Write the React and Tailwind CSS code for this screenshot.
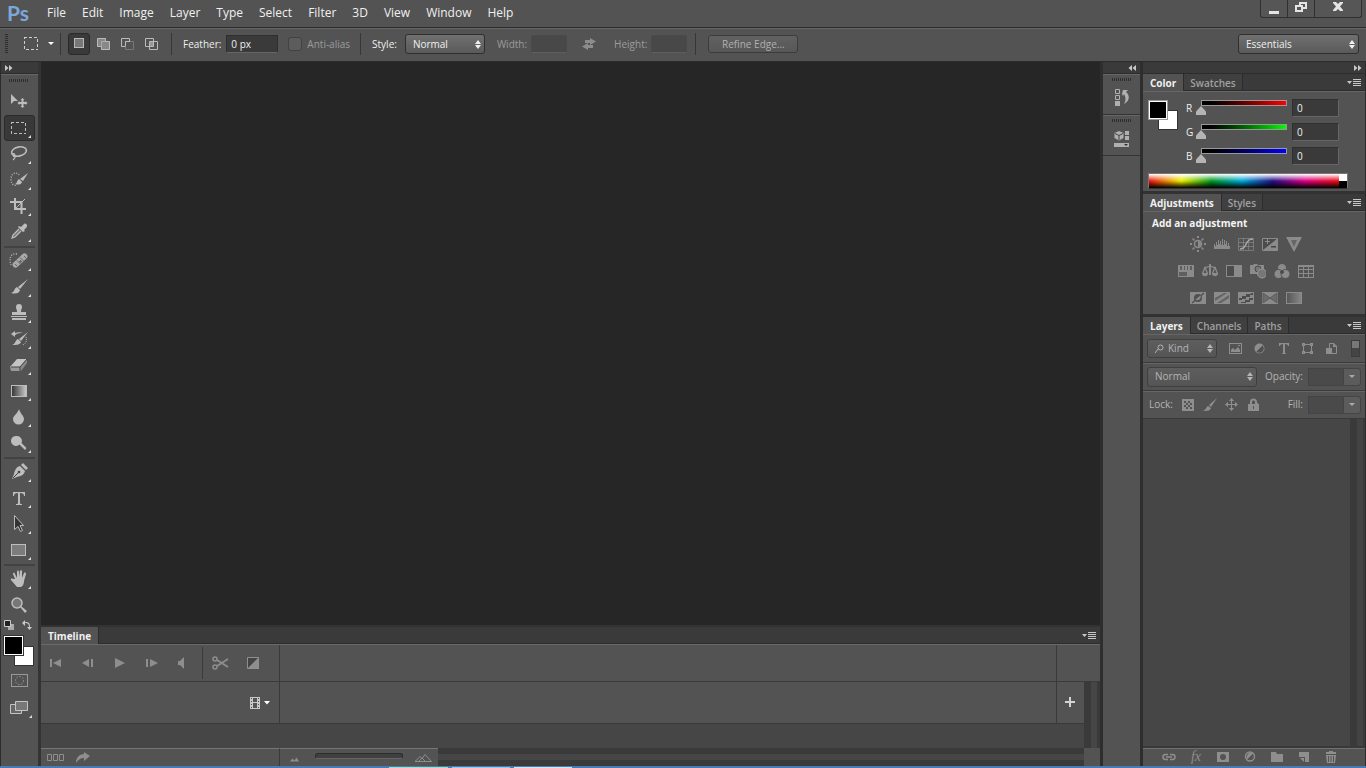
import { clsx } from 'clsx'

const menuItems = ['File', 'Edit', 'Image', 'Layer', 'Type', 'Select', 'Filter', '3D', 'View', 'Window', 'Help']

function Icon({ w = 18, h = 18, className, children }) {
  return (
    <svg width={w} height={h} viewBox={`0 0 ${w} ${h}`} fill="currentColor" className={clsx('block shrink-0', className)} aria-hidden="true">
      {children}
    </svg>
  )
}

function IconButton({ label, className, children }) {
  return (
    <button type="button" aria-label={label} className={clsx('flex shrink-0 items-center justify-center', className)}>
      {children}
    </button>
  )
}

function Divider() {
  return <div className="h-[22px] w-px shrink-0 bg-[#373737]" />
}

function UpDown({ className }) {
  return (
    <Icon w={6} h={9} className={className}>
      <path d="M0 4L3 0L6 4ZM0 5L3 9L6 5Z" />
    </Icon>
  )
}

function Grip({ vertical }) {
  return (
    <div
      className={
        vertical
          ? 'h-5 w-[3px] bg-[repeating-linear-gradient(to_bottom,#2e2e2e_0_1px,#535353_1px_2px)]'
          : 'h-[3px] w-5 bg-[repeating-linear-gradient(to_right,#2e2e2e_0_1px,#535353_1px_2px)]'
      }
    />
  )
}

function Chevrons({ left }) {
  return (
    <Icon w={8} h={6} className={clsx('text-[#c8c8c8]', left && 'rotate-180')}>
      <path d="M0 0L3.5 3L0 6ZM4 0L7.5 3L4 6Z" />
    </Icon>
  )
}

function Select({ label, options, className, selectClassName, muted, icon }) {
  return (
    <div className={clsx('relative flex shrink-0 items-center', muted ? 'text-[#b4b4b4]' : 'text-[#f0f0f0]', className)}>
      {icon && <div className="pointer-events-none absolute left-2">{icon}</div>}
      <select
        aria-label={label}
        className={clsx(
          'h-full w-full appearance-none rounded-[3px] border bg-linear-to-b text-[10px] outline-none',
          muted ? 'border-[#3f3f3f] from-[#5e5e5e] to-[#555555]' : 'border-[#2f2f2f] from-[#707070] to-[#5a5a5a]',
          selectClassName,
        )}
      >
        {options.map((option) => (
          <option key={option}>{option}</option>
        ))}
      </select>
      <UpDown className="pointer-events-none absolute right-1" />
    </div>
  )
}

function MarqueeIcon() {
  return (
    <Icon w={15} h={14}>
      <rect x=".5" y=".5" width="13" height="12" fill="none" stroke="currentColor" strokeDasharray="3 2" strokeDashoffset="1" shapeRendering="crispEdges" />
    </Icon>
  )
}

/* ---------- top bars ---------- */

function MenuBar() {
  return (
    <header className="flex h-[27px] shrink-0 justify-between">
      <div className="flex items-start">
        <div className="w-[39px] pl-[7px] font-['Lato',sans-serif] text-[21px] leading-[25px] font-bold text-[#7ba7d9]">Ps</div>
        <nav className="flex">
          {menuItems.map((item) => (
            <button key={item} type="button" className="h-[25px] px-[8px] text-[12px] text-[#f0f0f0]">
              {item}
            </button>
          ))}
        </nav>
      </div>
      <div className="mr-1 flex h-[18px] rounded-b-[3px] border border-t-0 border-[#303030] bg-[#565656] text-[#e4e4e4]">
        <IconButton label="Minimize" className="w-[27px] border-r border-[#303030]">
          <Icon w={10} h={12}>
            <path d="M0 8h10v3H0z" />
          </Icon>
        </IconButton>
        <IconButton label="Restore" className="w-[27px] border-r border-[#303030]">
          <Icon w={12} h={12} className="-mt-1">
            <path fillRule="evenodd" d="M4 1h8v7H8v3H0V4h4zM6 3v1h2v2h2V3zM2 6v3h4V6z" />
          </Icon>
        </IconButton>
        <IconButton label="Close" className="w-[46px]">
          <Icon w={10} h={11} className="-mt-1">
            <path d="M0 1h3l2 2 2-2h3v1L7 5.500 10 9v1H7L5 8l-2 2H0V9l3-3.500L0 2z" />
          </Icon>
        </IconButton>
      </div>
    </header>
  )
}

const selectionModes = [
  {
    label: 'New selection',
    icon: <rect x="2.5" y="1.5" width="9" height="9" fill="#777" stroke="#b8b8b8" />,
  },
  {
    label: 'Add to selection',
    icon: (
      <>
        <path d="M1.500 1.500h8v3h4v8h-8v-3h-4z" fill="#888" stroke="#bbb" />
        <path d="M5.500 9V4.500H9" fill="none" stroke="#aaa" />
      </>
    ),
  },
  {
    label: 'Subtract from selection',
    icon: (
      <>
        <path d="M5.500 4.500h8v8h-8z" fill="none" stroke="#777" />
        <path d="M5 9.500H1.500v-8h8V4M5.500 9.500v-5H10" fill="none" stroke="#bbb" />
      </>
    ),
  },
  {
    label: 'Intersect with selection',
    icon: (
      <>
        <path d="M1.500 1.500h8v8h-8zM5.500 4.500h8v8h-8z" fill="none" stroke="#bbb" />
        <path d="M6 5h3v4H6z" fill="#999" />
      </>
    ),
  },
]

function OptionsBar() {
  return (
    <div className="flex h-[34px] shrink-0 items-center border-t border-[#2b2b2b] pb-px pl-[5px] text-[10px] text-[#f0f0f0] shadow-[inset_0_1px_0_#666]">
      <Grip vertical />
      <button type="button" aria-label="Tool preset" className="mr-[6px] ml-4 flex items-center gap-[9px] text-[#cfcfcf]">
        <MarqueeIcon />
        <Icon w={6} h={4}>
          <path d="M0 0h6L3 3z" fill="#fff" />
        </Icon>
      </button>
      <Divider />
      <div className="mr-[9px] ml-[7px] flex items-center gap-[2px]">
        {selectionModes.map((mode, i) => (
          <IconButton
            key={mode.label}
            label={mode.label}
            className={clsx('h-[22px] w-[22px] rounded-[3px]', i === 0 && 'border border-[#2a2a2a] bg-[#3a3a3a]')}
          >
            <Icon w={14} h={14}>
              {mode.icon}
            </Icon>
          </IconButton>
        ))}
      </div>
      <Divider />
      <label className="ml-[11px] flex items-center gap-[5px]">
        Feather:
        <input
          type="text"
          defaultValue="0 px"
          className="h-[18px] w-[52px] border border-[#2f2f2f] border-b-[#666] bg-[#3a3a3a] px-1 outline-none"
        />
      </label>
      <label className="mr-[10px] ml-[10px] flex items-center gap-[5px] text-[#9c9c9c]">
        <input type="checkbox" disabled className="h-[14px] w-[14px] appearance-none rounded-[3px] border border-[#424242] bg-[#5c5c5c]" />
        Anti-alias
      </label>
      <Divider />
      <div className="mr-3 ml-[11px] flex items-center gap-2">
        Style:
        <Select label="Style" options={['Normal', 'Fixed Ratio', 'Fixed Size']} className="h-[20px] w-20" selectClassName="pl-[7px]" />
      </div>
      <label className="flex items-center gap-1 text-[#9c9c9c]">
        Width:
        <input type="text" disabled className="h-[18px] w-9 border border-[#4a4a4a] border-b-[#5e5e5e] bg-[#484848]" />
      </label>
      <IconButton label="Swap width and height" className="mr-[18px] ml-[15px] text-[#8c8c8c]">
        <Icon w={14} h={14}>
          <path d="M3 3h5V1l6 3.500L8 8V6H3zM11 8H6V6L0 9.500 6 13v-2h5z" />
        </Icon>
      </IconButton>
      <label className="mr-2 flex items-center gap-1 text-[#9c9c9c]">
        Height:
        <input type="text" disabled className="h-[18px] w-9 border border-[#4a4a4a] border-b-[#5e5e5e] bg-[#484848]" />
      </label>
      <Divider />
      <button
        type="button"
        disabled
        className="ml-3 h-[18px] w-[90px] rounded-[3px] border border-[#3c3c3c] bg-linear-to-b from-[#616161] to-[#575757] leading-4 text-[#b0b0b0]"
      >
        Refine Edge...
      </button>
      <Select label="Workspace" options={['Essentials', 'Painting', 'Photography']} className="mr-[7px] ml-auto h-[20px] w-[121px]" selectClassName="pl-[7px]" />
    </div>
  )
}

/* ---------- tools ---------- */

const toolGroups = [
  [
    {
      label: 'Move',
      single: true,
      icon: (
        <>
          <path d="M2 2l7 7H5l-3 3z" />
          <path d="M13.500 6l2 2h-1v2h2V9l2 2-2 2v-1h-2v2h1l-2 2-2-2h1v-2h-2v1l-2-2 2-2v1h2V8h-1z" />
        </>
      ),
    },
    {
      label: 'Rectangular Marquee',
      active: true,
      icon: <rect x="2.500" y="4.500" width="14" height="11" fill="none" stroke="currentColor" strokeDasharray="3 2" strokeDashoffset="1" shapeRendering="crispEdges" />,
    },
    {
      label: 'Lasso',
      icon: (
        <>
          <ellipse cx="10" cy="7.500" rx="7.500" ry="4.500" transform="rotate(-12 10 7.500)" fill="none" stroke="currentColor" strokeWidth="1.600" />
          <path d="M3 10c3-1 4 2 1 2.500M5 12c2 1 1 2-1 4" fill="none" stroke="currentColor" strokeWidth="1.300" />
        </>
      ),
    },
    {
      label: 'Quick Selection',
      icon: (
        <>
          <path d="M10 5c-1-3-8-3-8 4 0 6 4 7 6 6" fill="none" stroke="currentColor" strokeWidth="1.300" strokeDasharray="1 1.500" />
          <path d="M19 3l-5 8-3-2zM10 9l3 3c-1 3-4 3-7 2 2 0 2-4 4-5z" />
        </>
      ),
    },
    {
      label: 'Crop',
      icon: (
        <>
          <path d="M6 2v11h11M1 6h11.500v12" fill="none" stroke="currentColor" strokeWidth="2" />
          <path d="M7 12L16 3" stroke="currentColor" />
        </>
      ),
    },
    {
      label: 'Eyedropper',
      icon: (
        <>
          <path d="M17 2c2 1 1 3 0 4l-2 2 1 1-2 1-5-5 1-1 2 1 2-2c1-1 2-2 3-1z" />
          <path d="M10 7l-6 6-1 3 3-1 6-6" fill="#777" stroke="currentColor" strokeWidth="1.200" />
        </>
      ),
    },
  ],
  [
    {
      label: 'Spot Healing Brush',
      icon: (
        <>
          <path d="M8 3C1 2 0 8 2 14" fill="none" stroke="currentColor" strokeWidth="1.300" strokeDasharray="1 1.500" />
          <rect x="2" y="6.500" width="18" height="6" rx="3" transform="rotate(-43 11 9.500)" fill="#a8a8a8" />
          <path d="M8 9.500l4 4M11 6.500l4 4" stroke="#666" />
          <path d="M11 9h1v1h1v1h-1v1h-1v-1h-1v-1h1zM15 5h1v1h-1zM16 6h1v1h-1zM6 13h1v1H6zM7 14h1v1H7z" fill="#666" />
        </>
      ),
    },
    { label: 'Brush', icon: <path d="M19 2L11 12l-2-2zM8 10l3 3c-1 4-5 4-9 3 4-1 3-5 6-6z" /> },
    {
      label: 'Clone Stamp',
      icon: <path d="M7 4a3 3 0 1 1 6 0c0 2-1 2-1 5h5v3H3V9h5c0-3-1-3-1-5zM2 13h16v1H2zM3 15h14v2H3z" />,
    },
    {
      label: 'History Brush',
      icon: (
        <>
          <path d="M19 3l-7 9-2-2zM9 10l3 3c-1 3-5 3-9 3 4-1 3-5 6-6zM2 5l4-3v2c4-1 5-1 8 0-3 0-5 0-8 2v2z" />
          <path d="M17 8c1 4 0 7-4 8" fill="none" stroke="currentColor" strokeDasharray="1 1" />
        </>
      ),
    },
    {
      label: 'Eraser',
      icon: (
        <>
          <path d="M8 4h10l-7 8H1z" fill="#c4c4c4" />
          <path d="M1 12h10v4H2z" fill="#999" />
          <path d="M11 12l7-8v4l-6 8h-1z" fill="#888" />
          <path d="M2 12h9v4M11 12l7-8" fill="none" stroke="#444" />
        </>
      ),
    },
    {
      label: 'Gradient',
      icon: <rect x="2.500" y="4.500" width="15" height="11" fill="url(#toolGradient)" stroke="currentColor" />,
    },
    { label: 'Blur', icon: <path d="M10 2c1 4 5 7 5 10a5 5 0 0 1-11 0c0-3 5-6 6-10z" /> },
    { label: 'Dodge', icon: <path d="M8 3a5 5 0 0 1 4.500 7l5 5-1.500 2-5.500-5.500A5 5 0 1 1 8 3z" /> },
  ],
  [
    {
      label: 'Pen',
      icon: (
        <>
          <path d="M14 1l5 5-2 2-5-5zM11 4l5 5c-1 4-4 5-8 6l-5 2 2-5c1-4 2-7 6-8z" />
          <path d="M4 16l6-6" stroke="#444" />
          <circle cx="10" cy="10" r="1.300" fill="#444" />
        </>
      ),
    },
    {
      label: 'Horizontal Type',
      icon: <path d="M4 4h12v4h-1c0-2-1-3-4-3v10c0 1 1 1 2 1v1H7v-1c1 0 2 0 2-1V5C6 5 5 6 5 8H4z" />,
    },
    { label: 'Path Selection', icon: <path d="M5.500 1.500l9 10h-3.500l2.500 5-2 1-2.500-5-3.500 3z" fill="#333" stroke="#bbb" /> },
    { label: 'Rectangle', icon: <rect x="2.500" y="4.500" width="14" height="11" fill="#7c7c7c" stroke="currentColor" /> },
  ],
  [
    {
      label: 'Hand',
      icon: <path d="M6 10L4 5c0-2 2-1 2 0l2 4V3c0-2 2-2 2 0v5l1-6c0-1 2-1 2 0v7l2-5c1-1 2 0 2 1l-2 7c0 3-1 5-3 6H8c-2-2-4-5-6-7-1-1 1-2 2-1z" />,
    },
    {
      label: 'Zoom',
      single: true,
      icon: (
        <>
          <circle cx="8" cy="8" r="5" fill="#777" stroke="currentColor" strokeWidth="1.500" />
          <path d="M12 11l6 5-2 2-5-6z" />
        </>
      ),
    },
  ],
]

function Tool({ tool }) {
  return (
    <button
      type="button"
      aria-label={tool.label}
      className={clsx(
        'relative flex h-[26px] w-[31px] items-center justify-center rounded-[3px] border pr-px text-[#bdbdbd]',
        tool.active ? 'border-[#2b2b2b] bg-[#393939]' : 'border-transparent',
      )}
    >
      <Icon w={20} h={20}>
        {tool.icon}
      </Icon>
      {!tool.single && (
        <Icon w={3} h={3} className="absolute right-[3px] bottom-[2px] text-[#e0e0e0]">
          <path d="M3 0v3H0z" />
        </Icon>
      )}
    </button>
  )
}

function ToolBar() {
  return (
    <aside className="flex w-[41px] shrink-0 flex-col border-r-[3px] border-l border-r-[#343434] border-l-[#2c2c2c]">
      <div className="flex h-[12px] shrink-0 items-center border-b border-[#2c2c2c] bg-[#3a3a3a] pl-1">
        <Chevrons />
      </div>
      <div className="flex flex-col items-center border-t border-[#666] pt-1 pr-px">
        <Grip />
        <svg width="0" height="0" className="absolute" aria-hidden="true">
          <defs>
            <linearGradient id="toolGradient">
              <stop offset="0" stopColor="#333" />
              <stop offset="1" stopColor="#ccc" />
            </linearGradient>
            <linearGradient id="adjGradient">
              <stop offset="0" stopColor="#555" />
              <stop offset="1" stopColor="#888" />
            </linearGradient>
          </defs>
        </svg>
        <div className="mt-[7px] flex flex-col">
          {toolGroups.map((group, i) => (
            <div key={i} className={clsx('flex flex-col', i > 0 && 'mt-px border-t-2 border-[#424242]')}>
              {group.map((tool) => (
                <Tool key={tool.label} tool={tool} />
              ))}
            </div>
          ))}
        </div>
        <div className="mt-[2px] flex w-full justify-between pr-[4px] pl-[3px]">
          <IconButton label="Default colors">
            <Icon w={11} h={11}>
              <path d="M4 4h6v6H4z" fill="#aaa" />
              <path d="M.5.5h6v6h-6z" fill="#222" stroke="#ccc" />
            </Icon>
          </IconButton>
          <IconButton label="Switch colors" className="text-[#c8c8c8]">
            <Icon w={11} h={11}>
              <path d="M0 3l3-3v2c4 0 5 1 5 5h2l-2.500 3L5 7h2C7 4 6 3 3 3v3z" />
            </Icon>
          </IconButton>
        </div>
        <div className="relative mt-[5px] h-[30px] w-[30px]">
          <button type="button" aria-label="Background color" className="absolute right-0 bottom-0 h-5 w-5 border border-[#333] bg-white" />
          <button type="button" aria-label="Foreground color" className="absolute top-0 left-0 h-[19px] w-[19px] border border-white bg-black outline outline-[#333]" />
        </div>
        <IconButton label="Quick mask" className="mt-2 text-[#999]">
          <Icon w={17} h={13}>
            <rect x=".5" y=".5" width="16" height="12" fill="none" stroke="currentColor" />
            <circle cx="8.500" cy="6.500" r="4" fill="none" stroke="currentColor" strokeDasharray="1.500 1.500" />
          </Icon>
        </IconButton>
        <button type="button" aria-label="Screen mode" className="relative mt-[11px] flex h-[20px] w-[31px] items-center justify-center text-[#c4c4c4]">
          <Icon w={18} h={14}>
            <path d="M.5 3.500h11v9H.5z" fill="#666" stroke="currentColor" />
            <path d="M5.500.5h12v9h-12z" fill="#777" stroke="currentColor" />
          </Icon>
          <Icon w={3} h={3} className="absolute right-[3px] bottom-0 text-[#e0e0e0]">
            <path d="M3 0v3H0z" />
          </Icon>
        </button>
      </div>
    </aside>
  )
}

/* ---------- panels ---------- */

function PanelTabs({ tabs }) {
  return (
    <div className="flex h-[17px] shrink-0 bg-[#3a3a3a]">
      {tabs.map((tab, i) => (
        <button
          key={tab}
          type="button"
          className={clsx(
            'border-r border-r-[#2c2c2c] text-[10px] leading-4',
            i === 0 ? 'bg-[#535353] px-[7px] font-bold text-[#f0f0f0]' : 'border-b border-b-[#2c2c2c] bg-[#404040] px-[6px] pt-px font-semibold text-[#a0a0a0]',
          )}
        >
          {tab}
        </button>
      ))}
      <div className="flex flex-1 items-center justify-end border-b border-[#2c2c2c] pt-px pr-1">
        <IconButton label="Panel menu" className="text-[#c8c8c8]">
          <Icon w={14} h={7}>
            <path d="M0 2h5L2.500 5zM6 0h8v1H6zM6 2h8v1H6zM6 4h8v1H6zM6 6h8v1H6z" />
          </Icon>
        </IconButton>
      </div>
    </div>
  )
}

const channels = [
  { name: 'R', bar: 'bg-linear-to-r from-black to-[#f00]' },
  { name: 'G', bar: 'bg-linear-to-r from-black to-[#0f0]' },
  { name: 'B', bar: 'bg-linear-to-r from-black to-[#00f]' },
]

function ColorPanel() {
  return (
    <section className="border-b-[3px] border-[#323232]">
      <PanelTabs tabs={['Color', 'Swatches']} />
      <div className="h-[100px] border-t border-[#666] pt-[7px] pl-[6px]">
        <div className="flex">
          <div className="relative mt-[2px] h-[29px] w-[29px]">
            <button type="button" aria-label="Background color" className="absolute right-0 bottom-0 h-5 w-5 border border-[#333] bg-white" />
            <button type="button" aria-label="Foreground color" className="absolute top-0 left-0 h-[18px] w-[18px] border border-white bg-black outline outline-[#999]" />
          </div>
          <div className="ml-2 flex flex-col gap-[6px]">
            {channels.map(({ name, bar }) => (
              <div key={name} className="flex h-[18px] items-center text-[10px] text-[#f0f0f0]">
                <span className="w-[10px]">{name}</span>
                <div className="flex w-[96px] flex-col pb-px">
                  <div className={clsx('mx-[5px] h-[6px] border border-[#999]', bar)} />
                  <input
                    type="range"
                    min="0"
                    max="255"
                    defaultValue="0"
                    aria-label={`${name} slider`}
                    className="h-[9px] w-full appearance-none bg-transparent [&::-webkit-slider-thumb]:h-[9px] [&::-webkit-slider-thumb]:w-[10px] [&::-webkit-slider-thumb]:appearance-none [&::-webkit-slider-thumb]:bg-[#b4b4b4] [&::-webkit-slider-thumb]:[clip-path:polygon(50%_0,100%_60%,100%_100%,0_100%,0_60%)]"
                  />
                </div>
                <input
                  type="text"
                  aria-label={`${name} value`}
                  defaultValue="0"
                  className="h-[18px] w-[47px] border border-[#2f2f2f] border-r-[#666] border-b-[#666] bg-[#3a3a3a] px-1 outline-none"
                />
              </div>
            ))}
          </div>
        </div>
        <div className="mt-2 -ml-px flex h-[16px] w-[200px] border border-[#777] border-b-[#333]">
          <div className="flex-1 bg-[linear-gradient(to_bottom,#fff_0%,transparent_50%,#000_100%),linear-gradient(to_right,#e11_0%,#ee0_17%,#092_33%,#0ad_49%,#218_65%,#d08_82%,#e11_100%)]" />
          <div className="w-2 bg-linear-to-b from-white from-50% to-black to-50%" />
        </div>
      </div>
    </section>
  )
}

const box = <path d="M0 2h16v12H0z" />

const adjustments = [
  [
    {
      label: 'Brightness/Contrast',
      icon: (
        <>
          <circle cx="8" cy="8" r="3.500" fill="none" stroke="currentColor" strokeWidth="1.500" />
          <path d="M8 5a3 3 0 0 1 0 6zM7 0h2v2H7zM7 14h2v2H7zM0 7h2v2H0zM14 7h2v2h-2zM2 3l1-1 2 2-1 1zM14 3l-1-1-2 2 1 1zM2 13l1 1 2-2-1-1zM14 13l-1 1-2-2 1-1z" />
        </>
      ),
    },
    { label: 'Levels', icon: <path d="M0 13V8h1v2h1V6h1v3h1V4h1v4h1V5h1v4h1V3h1v6h1V4h1v4h1V5h1v5h1V7h1v3h1v3z" /> },
    {
      label: 'Curves',
      icon: (
        <>
          <path d="M.5 2.500h15v12H.5zM5.500 2v12M10.500 2v12M0 6.500h16M0 10.500h16" fill="none" stroke="currentColor" opacity=".65" />
          <path d="M2 13c8 0 4-10 13-10" fill="none" stroke="#aaa" strokeWidth="1.500" />
        </>
      ),
    },
    {
      label: 'Exposure',
      icon: (
        <>
          <path d="M.5 2.500h15v12H.5z" fill="#4c4c4c" stroke="currentColor" />
          <path d="M1 14L16 2v12zM3 5h2V3h1v2h2v1H6v2H5V6H3z" />
          <path d="M9 10h5v1.500H9z" fill="#444" />
        </>
      ),
    },
    {
      label: 'Vibrance',
      icon: (
        <>
          <path d="M0 1h16L8 16z" />
          <path d="M5 4h6l-3 7z" fill="#666" />
        </>
      ),
    },
  ],
  [
    {
      label: 'Hue/Saturation',
      icon: (
        <>
          {box}
          <path d="M2 3h2v4H2zM6 3h1v4H6zM9 3h1v4H9zM12 3h2v4h-2zM1 9h8v4H1z" fill="#5f5f5f" />
        </>
      ),
    },
    {
      label: 'Color Balance',
      icon: (
        <>
          <path d="M7 1h2v2l5 1v1l2 5v1c-1 3-5 3-6 0v-1l2-5-3-1v8H7V4L4 5l2 5v1c-1 3-5 3-6 0v-1l2-5V4l5-1z" />
          <path d="M3 6l1.500 4h-3zM13 6l1.500 4h-3z" fill="#535353" />
        </>
      ),
    },
    {
      label: 'Black & White',
      icon: (
        <>
          {box}
          <path d="M1 3h7v10H1z" fill="#4c4c4c" />
        </>
      ),
    },
    {
      label: 'Photo Filter',
      icon: (
        <>
          <path d="M0 2h3l1-1h3l1 1h6v9H0z" />
          <circle cx="8" cy="6" r="3" fill="#777" stroke="#4a4a4a" />
          <circle cx="12" cy="10.500" r="4.500" fill="#777" stroke="#999" />
        </>
      ),
    },
    {
      label: 'Channel Mixer',
      icon: (
        <g stroke="#535353">
          <circle cx="8" cy="5" r="4.500" />
          <circle cx="4.500" cy="11" r="4.500" />
          <circle cx="11.500" cy="11" r="4.500" />
          <circle cx="8" cy="9" r="1.500" fill="#444" />
        </g>
      ),
    },
    {
      label: 'Color Lookup',
      icon: <path fillRule="evenodd" d="M0 2h16v13H0zM1 4v2h4V4zM6 4v2h4V4zM11 4v2h4V4zM1 7v3h4V7zM6 7v3h4V7zM11 7v3h4V7zM1 11v3h4v-3zM6 11v3h4v-3zM11 11v3h4v-3z" />,
    },
  ],
  [
    {
      label: 'Invert',
      icon: (
        <>
          {box}
          <circle cx="8" cy="8" r="4" fill="#505050" />
          <path d="M2 13L14 3" stroke="#505050" strokeWidth="1.500" />
          <path d="M5.500 9.500l5-4c1 3-2 6-5 4z" />
        </>
      ),
    },
    {
      label: 'Posterize',
      icon: (
        <>
          {box}
          <path d="M1 8l9-5h3L1 11zM3 13L15 5v3l-8 5z" fill="#646464" />
        </>
      ),
    },
    {
      label: 'Threshold',
      icon: (
        <>
          {box}
          <path d="M1 8h3V6h4V4h5V3h2v2h-3v2H8v2H4v1H1zM3 13v-1h4v-2h4V8h4v2h-3v2H8v1z" fill="#4c4c4c" />
        </>
      ),
    },
    {
      label: 'Selective Color',
      icon: (
        <>
          {box}
          <path d="M1 3l7 5-7 5zM15 3L8 8l7 5z" fill="#6c6c6c" stroke="#5c5c5c" />
        </>
      ),
    },
    {
      label: 'Gradient Map',
      icon: <rect x=".5" y="2.500" width="15" height="11" fill="url(#adjGradient)" stroke="currentColor" />,
    },
  ],
]

function AdjustmentsPanel() {
  return (
    <section className="border-b-[3px] border-[#323232]">
      <PanelTabs tabs={['Adjustments', 'Styles']} />
      <div className="h-[103px] border-t border-[#666] pt-[3px] pl-[9px]">
        <h2 className="text-[10px] leading-4 font-bold text-[#f4f4f4]">Add an adjustment</h2>
        <div className="mt-[5px] mr-[25px] flex flex-col gap-[11px]">
          {adjustments.map((row, i) => (
            <div key={i} className="flex justify-center gap-2 text-[#8b8b8b]">
              {row.map((item) => (
                <IconButton key={item.label} label={item.label}>
                  <Icon w={16} h={16}>
                    {item.icon}
                  </Icon>
                </IconButton>
              ))}
            </div>
          ))}
        </div>
      </div>
    </section>
  )
}

function PercentField({ label }) {
  return (
    <div className="ml-auto flex items-center">
      <label className="flex items-center gap-[5px]">
        {label}:
        <input type="text" disabled className="h-[18px] w-[35px] border border-r-0 border-[#444] bg-[#4a4a4a]" />
      </label>
      <IconButton label={`${label} options`} className="h-[18px] w-[18px] rounded-r-[3px] border border-[#444] bg-[#5c5c5c]">
        <Icon w={6} h={3} className="text-[#aaa]">
          <path d="M0 0h6L3 3z" />
        </Icon>
      </IconButton>
    </div>
  )
}

const filterIcons = [
  {
    label: 'Pixel layers',
    icon: <path fillRule="evenodd" d="M0 1h13v11H0zM1 2v9h11V2zM2 10V8l2-2 2 2 3-3 2 3v2zM9 3h2v1H9z" />,
  },
  {
    label: 'Adjustment layers',
    icon: (
      <>
        <circle cx="6.500" cy="6.500" r="5" />
        <path d="M3.500 9.500l6-6a4 4 0 0 1-6 6z" fill="#505050" />
      </>
    ),
  },
  { label: 'Type layers', icon: <path d="M2 1h10v3h-1c0-1-1-2-3-2v9l1 .500v.500H5v-.500L6 11V2C4 2 3 3 3 4H2z" /> },
  {
    label: 'Shape layers',
    icon: (
      <>
        <path d="M2.500 2.500h8v8h-8z" fill="none" stroke="currentColor" />
        <path fillRule="evenodd" d="M1 1h3v3H1zM9 1h3v3H9zM1 9h3v3H1zM9 9h3v3H9zM2 2v1h1V2zM10 2v1h1V2zM2 10v1h1v-1zM10 10v1h1v-1z" />
      </>
    ),
  },
  {
    label: 'Smart objects',
    icon: (
      <>
        <path d="M4.500 6V1.500H9L11.500 4v7.500H7" fill="none" stroke="currentColor" />
        <path d="M8 1v4h4zM1 6h6v6H1z" />
      </>
    ),
  },
]

const lockIcons = [
  {
    label: 'Lock transparent pixels',
    icon: <path fillRule="evenodd" d="M1 1h12v12H1zM3 3v2h2V3zM7 3v2h2V3zM5 5v2h2V5zM9 5v2h2V5zM3 7v2h2V7zM7 7v2h2V7zM5 9v2h2V9zM9 9v2h2V9z" />,
  },
  { label: 'Lock image pixels', icon: <path d="M14 0L8 9 6 7zM5 8l3 2c-1 3-4 3-8 3 3-1 3-4 5-5z" /> },
  {
    label: 'Lock position',
    icon: <path d="M6.500 0L9 3H7v3h3V4l3 2.500L10 9V7H7v3h2l-2.500 3L4 10h2V7H3v2L0 6.500 3 4v2h3V3H4z" />,
  },
  {
    label: 'Lock all',
    icon: <path fillRule="evenodd" d="M3 5V4a3.500 3.500 0 0 1 7 0v1h1v1h1v7H1V6h2zM5 6h3V4C8 2 5 2 5 4zM6 8v3h1V8z" />,
  },
]

const layerActions = [
  {
    label: 'Link layers',
    icon: <path d="M6 9.500H3.500a2.500 2.500 0 0 1 0-5H6M8 4.500h2.500a2.500 2.500 0 0 1 0 5H8M4 7h6" fill="none" stroke="currentColor" strokeWidth="1.500" />,
  },
  { label: 'Layer style', text: 'fx' },
  { label: 'Add mask', icon: <path fillRule="evenodd" d="M1 2h12v10H1zM7 4a3 3 0 1 0 0 6 3 3 0 0 0 0-6z" /> },
  {
    label: 'New adjustment layer',
    icon: (
      <>
        <circle cx="7" cy="6.500" r="4.500" fill="none" stroke="currentColor" strokeWidth="1.400" />
        <path d="M3.500 10L10 3.500C8 1 3 3 3.500 10z" />
      </>
    ),
  },
  { label: 'New group', icon: <path d="M1 2h5l1 2h6v8H1z" /> },
  { label: 'New layer', icon: <path d="M2 2h10v10H8V7H2zM3 8h4v4z" /> },
  {
    label: 'Delete layer',
    icon: <path fillRule="evenodd" d="M5 1h4v1h3v2H2V2h3zM2 5h10l-1 8H3zM4 6v6h1V6zM6.500 6v6h1V6zM9 6v6h1V6z" />,
  },
]

function LayersPanel() {
  return (
    <section className="flex min-h-0 flex-1 flex-col text-[10px] text-[#b4b4b4]">
      <PanelTabs tabs={['Layers', 'Channels', 'Paths']} />
      <div className="flex h-7 shrink-0 items-center border-t border-[#666] px-1">
        <Select
          label="Filter type"
          options={['Kind', 'Name', 'Effect']}
          className="h-[19px] w-[70px]"
          selectClassName="pl-5"
          muted
          icon={
            <Icon w={9} h={9}>
              <path d="M0 9l3-4M5.500 1a2.500 2.500 0 1 1 0 5 2.500 2.500 0 0 1 0-5z" fill="none" stroke="currentColor" />
            </Icon>
          }
        />
        <div className="ml-3 flex gap-[11px] text-[#8e8e8e]">
          {filterIcons.map((item) => (
            <IconButton key={item.label} label={item.label}>
              <Icon w={13} h={13}>
                {item.icon}
              </Icon>
            </IconButton>
          ))}
        </div>
        <button type="button" aria-label="Toggle filtering" className="mr-px ml-auto h-[17px] w-[9px] border border-[#3c3c3c] bg-linear-to-b from-[#777] from-50% to-[#444] to-50%" />
      </div>
      <div className="flex h-7 shrink-0 items-center border-t border-[#3a3a3a] px-1 shadow-[inset_0_1px_0_#666]">
        <Select label="Blend mode" options={['Normal', 'Multiply', 'Screen']} className="h-[20px] w-[110px]" selectClassName="pl-[7px]" muted />
        <PercentField label="Opacity" />
      </div>
      <div className="flex h-[29px] shrink-0 items-center border-t border-b border-t-[#3a3a3a] border-b-[#3a3a3a] pr-1 pl-[6px] shadow-[inset_0_1px_0_#666]">
        <span>Lock:</span>
        <div className="ml-[8px] flex gap-2 text-[#8e8e8e]">
          {lockIcons.map((item) => (
            <IconButton key={item.label} label={item.label}>
              <Icon w={14} h={14}>
                {item.icon}
              </Icon>
            </IconButton>
          ))}
        </div>
        <PercentField label="Fill" />
      </div>
      <div className="flex flex-1 bg-[#464646]">
        <div className="ml-auto w-[15px] bg-[#3a3a3a] pl-[7px]">
          <div className="h-full w-[6px] bg-[#434343]" />
        </div>
      </div>
      <div className="flex h-5 shrink-0 items-center justify-end gap-[13px] border-t-2 border-t-[#393939] pr-[27px] text-[#8e8e8e] shadow-[inset_0_1px_0_#707070]">
        {layerActions.map((item) => (
          <IconButton key={item.label} label={item.label} className="h-[14px] w-[14px]">
            {item.text ? (
              <span className="font-['Liberation_Serif',serif] text-[14px] leading-[14px] italic">{item.text}</span>
            ) : (
              <Icon w={14} h={14}>
                {item.icon}
              </Icon>
            )}
          </IconButton>
        ))}
      </div>
    </section>
  )
}

function CollapsedDock() {
  return (
    <aside className="flex w-[43px] shrink-0 flex-col border-r-[3px] border-l-[3px] border-[#2e2e2e]">
      <div className="flex h-[12px] shrink-0 items-center justify-end border-b border-[#2c2c2c] bg-[#3a3a3a] pr-1">
        <Chevrons left />
      </div>
      <div className="flex h-[41px] flex-col items-center border-t border-b border-t-[#666] border-b-[#333] pt-[3px]">
        <Grip />
        <IconButton label="History" className="mt-2 text-[#b0b0b0]">
          <Icon w={16} h={18}>
            <path d="M1.500.5h4v4h-4zM1.500 6.500h4v4h-4z" fill="none" stroke="currentColor" />
            <path d="M1 12h5v5H1zM8 5l1-4h5l-2 2c4 3 4 9-2 12 2-3 2-7 0-10l-1 2z" />
          </Icon>
        </IconButton>
      </div>
      <div className="flex h-[41px] flex-col items-center border-t border-b border-t-[#666] border-b-[#333] pt-[3px]">
        <Grip />
        <IconButton label="Properties" className="mt-2 text-[#b0b0b0]">
          <Icon w={16} h={18}>
            <path d="M5 1l4.500 2v5L5 10.500.5 8V3z" />
            <path d="M1 3.500L5 5.500l4-2M5 5.500V10" fill="none" stroke="#444" />
            <path d="M11 1h4v4h-4zM11 6h4v4h-4zM0 13h15v4H0z" />
            <path d="M10 14h4l-2 2z" fill="#333" />
          </Icon>
        </IconButton>
      </div>
    </aside>
  )
}

/* ---------- timeline ---------- */

const playback = [
  { label: 'Go to first frame', d: 'M0 2h2v8H0zM11 2v8L3 6z' },
  { label: 'Previous frame', d: 'M7 2v8L0 6zM9 2h2v8H9z' },
  { label: 'Play', d: 'M1 1l10 5-10 5z' },
  { label: 'Next frame', d: 'M0 2h2v8H0zM4 2l8 4-8 4z' },
  { label: 'Mute audio', d: 'M0 4h2l4-4v12L2 8H0z' },
]

function Timeline() {
  return (
    <section className="flex shrink-0 flex-col border-t-2 border-[#323232] bg-[#535353]">
      <PanelTabs tabs={['Timeline']} />
      <div className="flex h-[38px] border-t border-b border-t-[#6a6a6a] border-b-[#3a3a3a]">
        <div className="flex w-[239px] shrink-0 items-center border-r border-[#3a3a3a] pb-px pl-[9px] text-[#8e8e8e]">
          <div className="flex gap-5">
            {playback.map((item) => (
              <IconButton key={item.label} label={item.label}>
                <Icon w={12} h={12}>
                  <path d={item.d} />
                </Icon>
              </IconButton>
            ))}
          </div>
          <div className="mr-[9px] ml-3 h-8 w-px bg-[#3a3a3a]" />
          <IconButton label="Split at playhead">
            <Icon w={17} h={14}>
              <path d="M5 4l11 7M5 10l11-7" stroke="currentColor" strokeWidth="1.800" />
              <path d="M3 1a2 2 0 1 1 0 4 2 2 0 0 1 0-4zM3 9a2 2 0 1 1 0 4 2 2 0 0 1 0-4z" fill="none" stroke="currentColor" strokeWidth="1.500" />
            </Icon>
          </IconButton>
          <IconButton label="Transition" className="ml-[18px]">
            <Icon w={12} h={12}>
              <path d="M.5.5h11v11H.5z" fill="#444" stroke="currentColor" />
              <path d="M12 0v12H0z" />
            </Icon>
          </IconButton>
        </div>
        <div className="flex-1" />
        <div className="w-11 border-l border-[#3a3a3a]" />
      </div>
      <div className="flex">
        <div className="flex-1">
          <div className="flex h-[42px] border-b border-[#3a3a3a]">
            <div className="flex w-[239px] shrink-0 items-center justify-end border-r border-[#3a3a3a] pr-[9px]">
              <button type="button" aria-label="Media" className="flex items-center gap-1 text-[#c8c8c8]">
                <Icon w={10} h={12}>
                  <path fillRule="evenodd" d="M0 0h10v12H0zM3 1v4h4V1zM3 6v5h4V6zM1 1v1h1V1zM1 4v1h1V4zM1 7v1h1V7zM1 10v1h1v-1zM8 1v1h1V1zM8 4v1h1V4zM8 7v1h1V7zM8 10v1h1v-1z" />
                </Icon>
                <Icon w={6} h={4}>
                  <path d="M0 0h6L3 3.500z" fill="#fff" />
                </Icon>
              </button>
            </div>
            <div className="flex-1" />
            <IconButton label="Add media" className="w-7 border-l border-[#3a3a3a] pr-px pb-px text-[#d4d4d4]">
              <Icon w={10} h={10}>
                <path d="M4 0h2v4h4v2H6v4H4V6H0V4h4z" />
              </Icon>
            </IconButton>
          </div>
          <div className="h-6 bg-[#464646]" />
        </div>
        <div className="w-4 bg-[#3a3a3a] pl-[7px]">
          <div className="h-full w-[6px] bg-[#464646]" />
        </div>
      </div>
      <div className="flex h-[18px]">
        <div className="flex w-[239px] shrink-0 items-center gap-3 border-t border-r border-t-[#757575] border-r-[#3a3a3a] pl-[6px] text-[#8e8e8e]">
          <IconButton label="Convert to frame animation">
            <Icon w={17} h={7}>
              <path d="M.5.5h4v6h-4zM6.500.5h4v6h-4zM12.500.5h4v6h-4z" fill="none" stroke="currentColor" />
            </Icon>
          </IconButton>
          <IconButton label="Render video">
            <Icon w={14} h={11}>
              <path d="M8 0l6 4-6 5V6C4 6 2 8 0 11c0-5 3-9 8-9z" />
            </Icon>
          </IconButton>
        </div>
        <div className="flex w-[158px] shrink-0 items-center gap-4 border-t border-[#757575] pl-[10px] text-[#8e8e8e]">
          <Icon w={9} h={5} className="mt-1">
            <path d="M0 4.500l2.500-3 2 2 2-3 2.500 4z" />
          </Icon>
          <input
            type="range"
            aria-label="Timeline zoom"
            className="mb-1 h-[6px] w-[88px] appearance-none rounded-full border border-[#2c2c2c] border-b-[#666] bg-[#404040] [&::-webkit-slider-thumb]:w-0 [&::-webkit-slider-thumb]:appearance-none"
          />
          <Icon w={17} h={8} className="-ml-1">
            <path d="M0 7.500l5-5 2 2 3-4 6.500 7zM4 7l3-3 3 3" fill="none" stroke="currentColor" />
          </Icon>
        </div>
        <div className="flex flex-1 items-center bg-[#3a3a3a]">
          <div className="h-[6px] flex-1 bg-[#464646]" />
        </div>
        <div className="w-4" />
      </div>
    </section>
  )
}

export default function App() {
  return (
    <div className="flex h-screen flex-col overflow-hidden bg-[#535353] font-['Open_Sans','Noto_Sans',sans-serif]">
      <MenuBar />
      <OptionsBar />
      <div className="flex min-h-0 flex-1 border-t border-[#2c2c2c]">
        <ToolBar />
        <div className="flex min-w-0 flex-1 flex-col">
          <main className="flex-1 bg-[#262626]" />
          <Timeline />
        </div>
        <CollapsedDock />
        <div className="flex w-[223px] shrink-0 flex-col border-r border-[#2c2c2c]">
          <div className="flex h-[12px] shrink-0 items-center justify-end border-b border-[#2c2c2c] bg-[#3a3a3a] pr-[3px]">
            <Chevrons />
          </div>
          <ColorPanel />
          <AdjustmentsPanel />
          <LayersPanel />
        </div>
      </div>
      <footer className="flex h-[2px] shrink-0 gap-1 border-t border-[#4a7ab5] bg-[#4a7ab5] pl-[389px]">
        <div className="w-[59px] bg-[#a5dfb8]" />
        <div className="w-[58px] bg-[#9fc4e6]" />
        <div className="w-[58px] bg-[#d5e6f6]" />
      </footer>
    </div>
  )
}
